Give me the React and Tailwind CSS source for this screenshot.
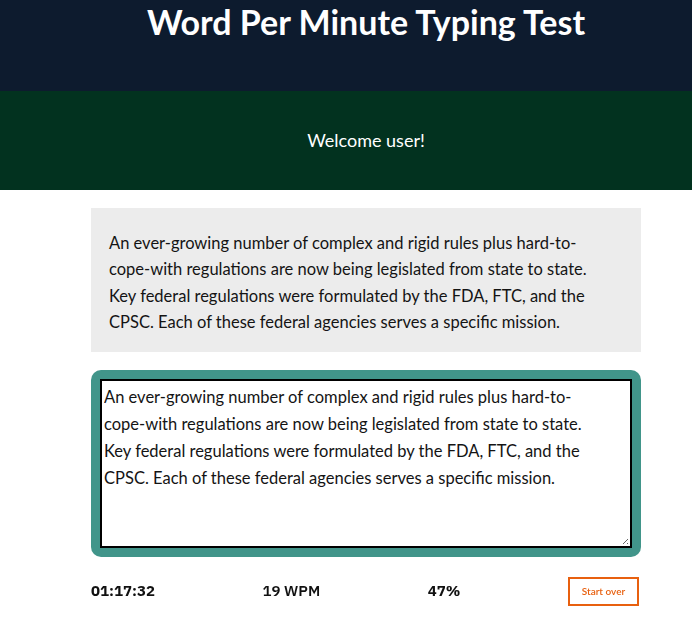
import React, { useEffect, useRef } from "react";

const text =
  "An ever-growing number of complex and rigid rules plus hard-to-cope-with regulations are now being legislated from state to state. Key federal regulations were formulated by the FDA, FTC, and the CPSC. Each of these federal agencies serves a specific mission.";

export default function App() {
  const ta = useRef(null);
  useEffect(() => {
    if (ta.current) {
      ta.current.focus();
      ta.current.setSelectionRange(text.length, text.length);
    }
  }, []);
  return (
    <div className="w-[692px] min-h-[617px] bg-white overflow-hidden" style={{ fontFamily: "Lato, 'Open Sans', sans-serif" }}>
      <header className="h-[91px] bg-[#0d1b2e] flex justify-center pl-[40px] pt-[2px]">
        <h1 className="text-[34px] leading-[40px] font-bold text-white">Word Per Minute Typing Test</h1>
      </header>
      <div className="h-[99px] bg-[#02321f] flex items-center justify-center pl-[40px]">
        <p className="text-white text-[18px]">Welcome user!</p>
      </div>
      <main className="w-[550px] ml-[91px] pt-[18px]">
        <div className="bg-[#ececec] pl-[18px] pt-[22px] pb-[18px] h-[144px]">
          <p className="w-[498px] text-[16.5px] leading-[26.3px] text-[#141414]">{text}</p>
        </div>
        <div className="mt-[18px] bg-[#41958a] rounded-[10px] p-[9px]">
          <textarea
            ref={ta}
            className="block w-full h-[169px] bg-white border-2 border-black outline outline-1 outline-white -outline-offset-4 pl-[2px] pr-[28px] pt-[3px] pb-0 text-[16.5px] leading-[27px] text-[#141414] caret-black resize-y"
            style={{ fontFamily: "Lato, 'Open Sans', sans-serif" }}
            defaultValue={text}
          />
        </div>
        <div className="flex items-center justify-between mt-[20px]" style={{ fontFamily: "'IBM Plex Sans', 'Liberation Sans', sans-serif" }}>
          <span className="text-[15px] font-bold text-[#111]">01:17:32</span>
          <span className="text-[15px] font-semibold text-[#111]">19 WPM</span>
          <span className="text-[15px] font-bold text-[#111]">47%</span>
          <button className="w-[71px] h-[29px] mr-[2px] border-2 border-[#e8600f] text-[#e8600f] text-[10px] font-semibold" style={{ fontFamily: "Lato, sans-serif" }}>
            Start over
          </button>
        </div>
      </main>
    </div>
  );
}
